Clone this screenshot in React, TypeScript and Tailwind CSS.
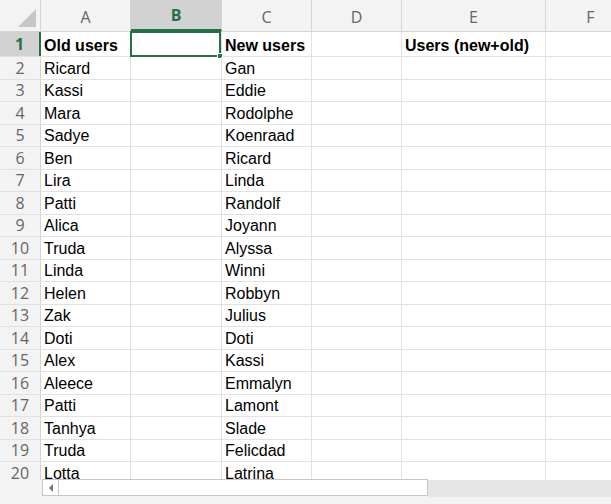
import React from "react";

const cols = [
  { l: "A", w: 90 },
  { l: "B", w: 91 },
  { l: "C", w: 90 },
  { l: "D", w: 90 },
  { l: "E", w: 144 },
  { l: "F", w: 90 },
];
const rows: string[][] = [
  ["Old users", "", "New users", "", "Users (new+old)"],
  ["Ricard", "", "Gan"],
  ["Kassi", "", "Eddie"],
  ["Mara", "", "Rodolphe"],
  ["Sadye", "", "Koenraad"],
  ["Ben", "", "Ricard"],
  ["Lira", "", "Linda"],
  ["Patti", "", "Randolf"],
  ["Alica", "", "Joyann"],
  ["Truda", "", "Alyssa"],
  ["Linda", "", "Winni"],
  ["Helen", "", "Robbyn"],
  ["Zak", "", "Julius"],
  ["Doti", "", "Doti"],
  ["Alex", "", "Kassi"],
  ["Aleece", "", "Emmalyn"],
  ["Patti", "", "Lamont"],
  ["Tanhya", "", "Slade"],
  ["Truda", "", "Felicdad"],
  ["Lotta", "", "Latrina"],
];

export default function App() {
  return (
    <div className="w-[611px] h-[504px] bg-white overflow-hidden relative" style={{ fontFamily: "'Liberation Sans', Arial, sans-serif" }}>
      <div className="h-[480px] overflow-hidden">
        <div className="flex h-[32px] bg-[#f3f3f3] border-b border-[#d4d4d4]" style={{ fontFamily: "'Open Sans', sans-serif" }}>
          <div className="w-[41px] shrink-0 border-r border-[#d4d4d4] relative">
            <div className="absolute right-[4px] bottom-[4px] w-0 h-0 border-l-[18px] border-l-transparent border-b-[18px] border-b-[#c6c6c6]" />
          </div>
          {cols.map((c) => (
            <div
              key={c.l}
              style={{ width: c.w }}
              className={`shrink-0 flex items-end justify-center pb-[2px] text-[16px] border-r border-[#d4d4d4] ${c.l === "B" ? "bg-[#d2d2d2] text-[#217346] font-bold border-b-2 border-b-[#217346]" : "text-[#666]"}`}
            >
              {c.l}
            </div>
          ))}
        </div>
        {rows.map((r, i) => (
          <div key={i} className={`flex border-b border-[#e1e1e1] ${i === 0 ? "h-[25px]" : "h-[22.5px]"}`}>
            <div
              className={`w-[41px] shrink-0 flex items-center justify-center text-[16px] border-r ${i === 0 ? "bg-[#d2d2d2] text-[#217346] font-bold border-r-2 border-r-[#217346]" : "bg-[#f3f3f3] text-[#666] border-[#d4d4d4]"}`}
              style={{ fontFamily: "'Open Sans', sans-serif" }}
            >
              {i + 1}
            </div>
            {cols.map((c, j) => (
              <div
                key={c.l}
                style={{ width: c.w }}
                className={`shrink-0 relative flex items-end leading-[20px] px-[3px] text-[16px] text-black whitespace-nowrap border-r border-[#e1e1e1] ${i === 0 ? "font-semibold" : ""}`}
              >
                {r[j] ?? ""}
                {i === 0 && j === 1 && (
                  <div className="absolute -left-[1px] -top-[1px] -right-[0px] -bottom-[1px] border-2 border-[#217346]">
                    <div className="absolute -right-[4px] -bottom-[4px] w-[6px] h-[6px] bg-[#217346] border border-white" />
                  </div>
                )}
              </div>
            ))}
          </div>
        ))}
      </div>
      <div className="absolute left-0 right-0 top-[480px] h-[24px] bg-[#f3f3f3] flex">
        <div className="w-[42px] shrink-0" />
        <div className="w-[386px] h-[17px] -mt-[1px] bg-white border border-[#c6c6c6] flex">
          <div className="w-[16px] border-r border-[#c6c6c6] flex items-center justify-center">
            <div className="w-0 h-0 border-t-[4px] border-b-[4px] border-t-transparent border-b-transparent border-r-[4px] border-r-[#777]" />
          </div>
        </div>
        <div className="flex-1 h-[17px] bg-[#e6e6e6]" />
      </div>
    </div>
  );
}
